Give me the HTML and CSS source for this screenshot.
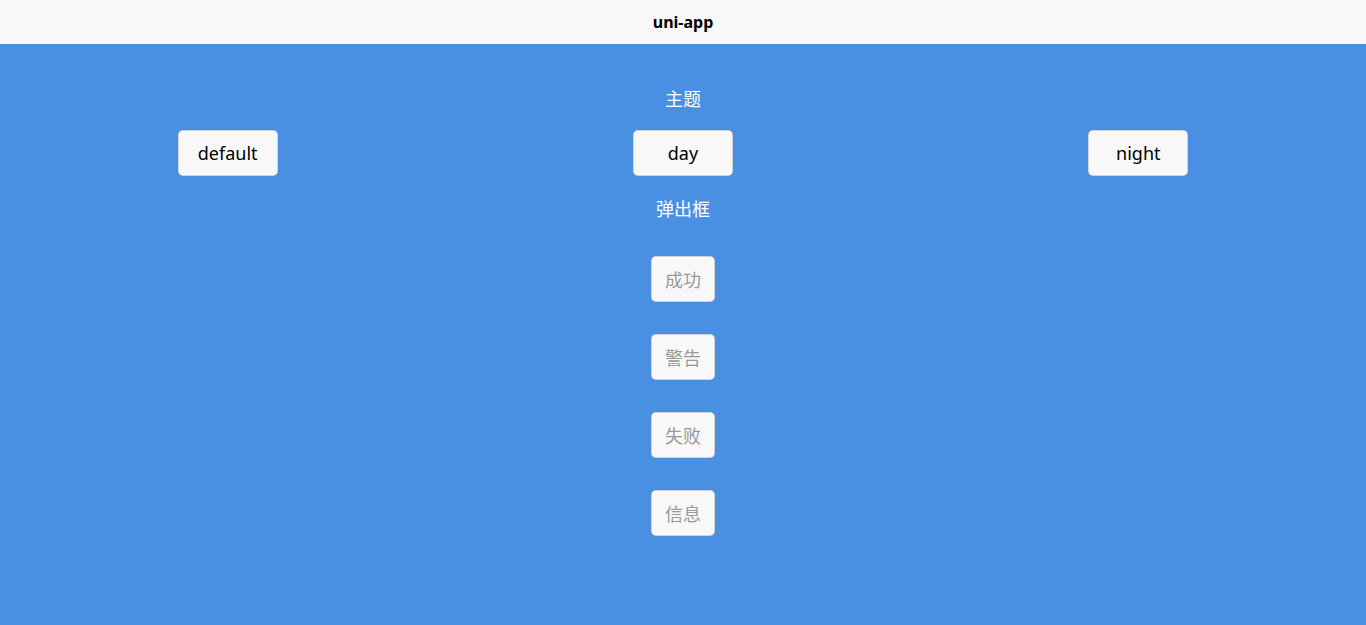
FILE: index.html
```html
<!DOCTYPE html>
<html lang="zh-CN">
<head>
<meta charset="utf-8">
<title>uni-app</title>
<link rel="stylesheet" href="styles.css">
</head>
<body>
<header class="navbar"><span class="navbar-title">uni-app</span></header>
<main class="page">
  <div class="section-title">主题</div>
  <div class="theme-row">
    <div class="theme-cell"><button class="btn btn-theme">default</button></div>
    <div class="theme-cell"><button class="btn btn-theme">day</button></div>
    <div class="theme-cell"><button class="btn btn-theme">night</button></div>
  </div>
  <div class="section-title section-title-2">弹出框</div>
  <div class="popup-list">
    <button class="btn btn-popup">成功</button>
    <button class="btn btn-popup">警告</button>
    <button class="btn btn-popup">失败</button>
    <button class="btn btn-popup">信息</button>
  </div>
</main>
</body>
</html>
```

FILE: styles.css
```css
html, body {
  margin: 0;
  padding: 0;
  height: 100%;
}
body {
  font-family: "Noto Sans", "Noto Sans CJK SC", sans-serif;
  background: #4a90e2;
  display: flex;
  flex-direction: column;
}
.navbar {
  height: 44px;
  flex: 0 0 44px;
  background: #f8f8f8;
  display: flex;
  align-items: center;
  justify-content: center;
}
.navbar-title {
  font-size: 16px;
  font-weight: 700;
  color: #000;
}
.page {
  flex: 1;
  background: #4a90e2;
  display: flex;
  flex-direction: column;
  align-items: center;
  padding-top: 42px;
}
.section-title {
  color: #fff;
  font-size: 18px;
  line-height: 24px;
  height: 24px;
  font-family: "Noto Sans CJK SC", sans-serif;
}
.theme-row {
  display: flex;
  width: 100%;
  margin-top: 20px;
}
.theme-cell {
  flex: 1;
  display: flex;
  justify-content: center;
}
.btn {
  box-sizing: border-box;
  height: 46px;
  padding: 0;
  background: #f8f8f8;
  border: 1px solid rgba(0, 0, 0, 0.15);
  border-radius: 5px;
  font-size: 18px;
  font-family: "Noto Sans", "Noto Sans CJK SC", sans-serif;
  color: #000;
  line-height: 44px;
  white-space: nowrap;
  text-align: center;
  cursor: pointer;
}
.btn-theme {
  width: 100px;
}
.section-title-2 {
  margin-top: 20px;
}
.popup-list {
  display: flex;
  flex-direction: column;
  align-items: center;
  gap: 32px;
  margin-top: 36px;
}
.btn-popup {
  width: 64px;
  color: #999;
  font-family: "Noto Sans CJK SC", sans-serif;
  line-height: 42px;
}
```
